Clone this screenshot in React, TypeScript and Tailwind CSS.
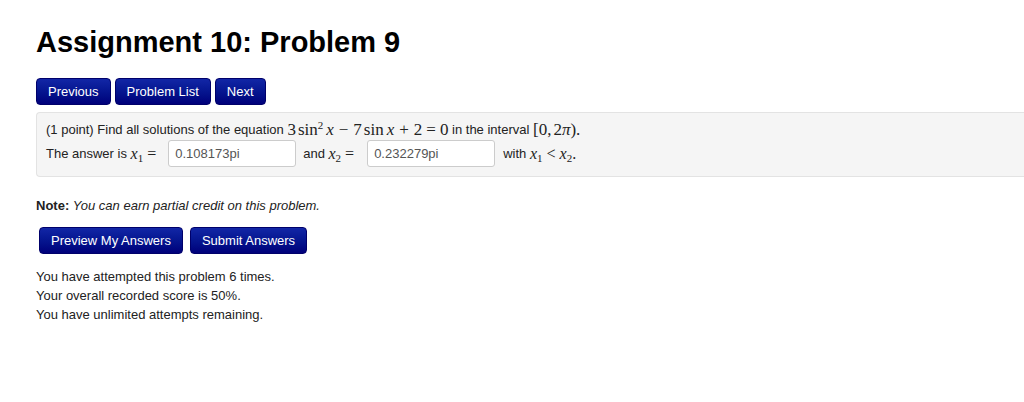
import React from "react";

const sans = { fontFamily: '"Liberation Sans", Arial, sans-serif' };

function NavButton({ children }: { children: React.ReactNode }) {
  return (
    <button className="h-[27px] px-[11px] rounded-[4px] border border-[#00006a] bg-linear-to-b from-[#1226a6] to-[#00007a] text-white text-[13px] leading-none">
      {children}
    </button>
  );
}

// MathJax-like inline math
function M({ children, big }: { children: React.ReactNode; big?: boolean }) {
  return (
    <span
      className={big ? "text-[17px] whitespace-nowrap" : "text-[16px] whitespace-nowrap"}
      style={{ fontFamily: '"Liberation Serif", "Times New Roman", serif' }}
    >
      {children}
    </span>
  );
}

function V({ children }: { children: React.ReactNode }) {
  return <span className="italic">{children}</span>;
}

function Sub({ children }: { children: React.ReactNode }) {
  return <span className="text-[11px] relative top-[3px]">{children}</span>;
}

// binary operator and relation spacing
function Op({ children }: { children: React.ReactNode }) {
  return <span className="mx-[5px]">{children}</span>;
}

function Rel({ children }: { children: React.ReactNode }) {
  return <span className="mx-[4px]">{children}</span>;
}

function AnswerInput({ value }: { value: string }) {
  return (
    <input
      readOnly
      value={value}
      className="w-[128px] h-[27px] px-[6px] rounded-[3px] border border-[#cccccc] bg-white text-[13px] text-[#555555] outline-none"
    />
  );
}

export default function App() {
  return (
    <div className="min-h-[402px] bg-white text-[#222] pl-[36px] pt-[24px]" style={sans}>
      <h1 className="text-[29px] font-bold leading-[36px] text-black">Assignment 10: Problem 9</h1>

      <div className="mt-[18px] flex gap-[4px]">
        <NavButton>Previous</NavButton>
        <NavButton>Problem List</NavButton>
        <NavButton>Next</NavButton>
      </div>

      <div className="mt-[7px] h-[65px] border border-[#e3e3e3] rounded-l-[4px] border-r-0 bg-[#f5f5f5] pl-[9px] pt-[6px] text-[13px]">
        <div className="h-[21px] flex items-center">
          <span>(1 point) Find all solutions of the equation&nbsp;</span>
          <M big>
            3<span className="ml-[2px]">sin</span>
            <sup className="text-[11px]">2</sup>
            <V><span className="ml-[3px]">x</span></V>
            <Op>−</Op>7<span className="ml-[2px]">sin</span>
            <V><span className="ml-[3px]">x</span></V>
            <Op>+</Op>2<Rel>=</Rel>0
          </M>
          <span>&nbsp;in the interval&nbsp;</span>
          <M big>
            [0,<span className="ml-[2px]">2</span>
            <V>π</V>).
          </M>
        </div>
        <div className="h-[27px] flex items-center">
          <span>The answer is&nbsp;</span>
          <M>
            <V>x</V>
            <Sub>1</Sub>
            <Rel>=</Rel>
          </M>
          <span className="w-[8px]" />
          <AnswerInput value="0.108173pi" />
          <span className="ml-[7px]">and&nbsp;</span>
          <M>
            <V>x</V>
            <Sub>2</Sub>
            <Rel>=</Rel>
          </M>
          <span className="w-[9px]" />
          <AnswerInput value="0.232279pi" />
          <span className="ml-[8px]">with&nbsp;</span>
          <M>
            <V>x</V>
            <Sub>1</Sub>
            <Rel>&lt;</Rel>
            <V>x</V>
            <Sub>2</Sub>.
          </M>
        </div>
      </div>

      <p className="mt-[20px] text-[13px] leading-[18px]">
        <b>Note:</b> <i>You can earn partial credit on this problem.</i>
      </p>

      <div className="mt-[12px] ml-[3px] flex gap-[7px]">
        <NavButton>Preview My Answers</NavButton>
        <NavButton>Submit Answers</NavButton>
      </div>

      <div className="mt-[13px] text-[13px] leading-[19px]">
        <p>You have attempted this problem 6 times.</p>
        <p>Your overall recorded score is 50%.</p>
        <p>You have unlimited attempts remaining.</p>
      </div>
    </div>
  );
}
